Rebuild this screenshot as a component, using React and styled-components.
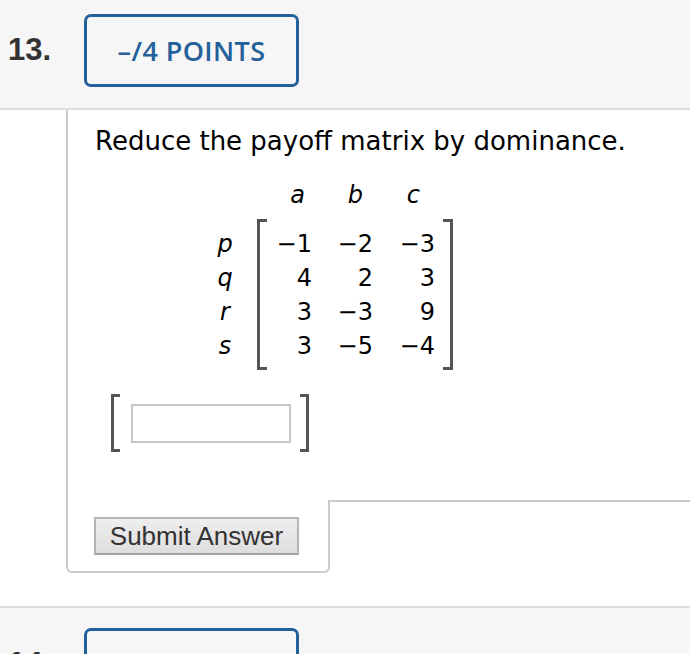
import React from "react";
import styled, { createGlobalStyle } from "styled-components";

const Global = createGlobalStyle`
  html, body { margin: 0; padding: 0; background: #fff; }
  body { overflow: hidden; }
`;

const Page = styled.div`
  width: 690px;
  height: 654px;
  overflow: hidden;
  background: #fff;
`;

const Header = styled.div`
  display: flex;
  align-items: center;
  background: #f6f6f6;
  padding: ${(p) => p.$top}px 0 21px 8px;
  border-bottom: ${(p) => (p.$divider ? "2px solid #dddddd" : "none")};
`;

const QNumber = styled.div`
  width: 76px;
  font-family: "Liberation Sans", Arial, sans-serif;
  font-weight: 700;
  font-size: 31px;
  line-height: 1;
  color: #333;
  margin-top: -3px;
`;

const Badge = styled.div`
  box-sizing: border-box;
  width: 215px;
  height: 73px;
  border: 3px solid #24609a;
  border-radius: 7px;
  display: flex;
  align-items: center;
  justify-content: center;
  font-family: "Open Sans", sans-serif;
  font-weight: 600;
  font-size: 27px;
  letter-spacing: 0.4px;
  color: #24609a;
  background: #f6f6f6;
`;

const Body = styled.div`
  padding: 0 0 33px 66px;
  border-bottom: 2px solid #dddddd;
`;

const Content = styled.div`
  border-left: 2px solid #cccccc;
  padding: 14px 0 48px 27px;
`;

const Prompt = styled.div`
  font-family: "DejaVu Sans", Verdana, sans-serif;
  font-size: 26px;
  line-height: 34px;
  color: #000;
`;

const Matrix = styled.div`
  display: grid;
  grid-template-columns: 40px 22px 45px 61px 62px 18px;
  grid-template-rows: 49px repeat(4, 34px);
  margin: 20px 0 0 110px;
  font-family: "DejaVu Sans", Verdana, sans-serif;
  font-size: 24px;
  line-height: 34px;
  color: #000;
`;

const ColHead = styled.div`
  grid-row: 1;
  grid-column: ${(p) => p.$col};
  text-align: right;
  padding-right: ${(p) => p.$pad}px;
  font-style: italic;
`;

const RowLabel = styled.div`
  grid-column: 1;
  grid-row: ${(p) => p.$row};
  text-align: center;
  font-style: italic;
`;

const Cell = styled.div`
  grid-column: ${(p) => p.$col};
  grid-row: ${(p) => p.$row};
  text-align: right;
`;

const Bracket = styled.div`
  box-sizing: border-box;
  width: 10px;
  border: 3px solid #555;
  ${(p) => (p.$side === "left" ? "border-right: none;" : "border-left: none;")}
  filter: blur(0.3px);
`;

const MatrixBracket = styled(Bracket)`
  grid-row: 2 / 6;
  grid-column: ${(p) => (p.$side === "left" ? 2 : 6)};
  justify-self: end;
  margin: -8px 0 -7px;
`;

const AnswerRow = styled.div`
  display: flex;
  align-items: center;
  margin: 31px 0 0 16px;
  height: 58px;
`;

const AnswerBracket = styled(Bracket)`
  height: 58px;
  width: 9px;
`;

const AnswerInput = styled.input`
  box-sizing: border-box;
  width: 160px;
  height: 39px;
  margin: 0 9px 0 11px;
  border: 2px solid #c6c6c6;
  background: #fff;
  outline: none;
`;

const Footer = styled.div`
  display: flex;
  align-items: flex-start;
`;

const ButtonPanel = styled.div`
  box-sizing: border-box;
  width: 264px;
  height: 73px;
  border: 2px solid #cccccc;
  border-top: none;
  border-radius: 0 0 6px 6px;
  padding: 17px 0 0 26px;
`;

const Filler = styled.div`
  flex: 1;
  border-top: 2px solid #cccccc;
`;

const SubmitButton = styled.button`
  box-sizing: border-box;
  width: 205px;
  height: 38px;
  padding: 0;
  border: 2px solid #b4b4b4;
  border-bottom-color: #a6a6a6;
  background: linear-gradient(#eeeeee, #dedede);
  font-family: "Liberation Sans", Arial, sans-serif;
  font-size: 26px;
  color: #333;
  line-height: 1;
`;

const matrix = [
  ["p", "−1", "−2", "−3"],
  ["q", "4", "2", "3"],
  ["r", "3", "−3", "9"],
  ["s", "3", "−5", "−4"],
];

export default function App() {
  return (
    <Page>
      <Global />
      <Header $top={14} $divider>
        <QNumber>13.</QNumber>
        <Badge>–/4 POINTS</Badge>
      </Header>
      <Body>
        <Content>
          <Prompt>Reduce the payoff matrix by dominance.</Prompt>
          <Matrix>
            <ColHead $col={3} $pad={7}>a</ColHead>
            <ColHead $col={4} $pad={10}>b</ColHead>
            <ColHead $col={5} $pad={15}>c</ColHead>
            <MatrixBracket $side="left" />
            <MatrixBracket $side="right" />
            {matrix.map((row, i) => (
              <React.Fragment key={row[0]}>
                <RowLabel $row={i + 2}>{row[0]}</RowLabel>
                {row.slice(1).map((v, j) => (
                  <Cell key={j} $row={i + 2} $col={j + 3}>
                    {v}
                  </Cell>
                ))}
              </React.Fragment>
            ))}
          </Matrix>
          <AnswerRow>
            <AnswerBracket $side="left" />
            <AnswerInput type="text" aria-label="answer" />
            <AnswerBracket $side="right" />
          </AnswerRow>
        </Content>
        <Footer>
          <ButtonPanel>
            <SubmitButton>Submit Answer</SubmitButton>
          </ButtonPanel>
          <Filler />
        </Footer>
      </Body>
      <Header $top={20}>
        <QNumber>14.</QNumber>
        <Badge>–/4 POINTS</Badge>
      </Header>
    </Page>
  );
}
